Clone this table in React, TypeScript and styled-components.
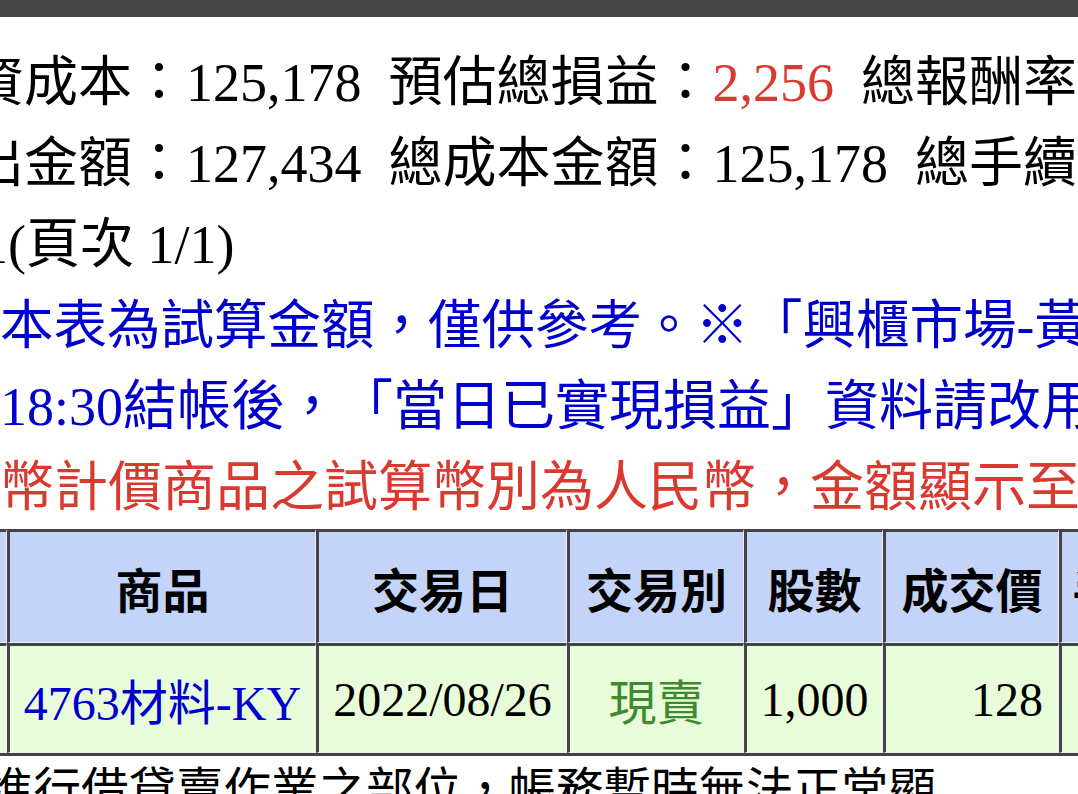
import React from "react";
import styled, { createGlobalStyle } from "styled-components";

const GlobalStyle = createGlobalStyle`
  html, body {
    margin: 0;
    padding: 0;
    background: #ffffff;
    overflow: hidden;
  }
`;

const SERIF = `"Liberation Serif", "Noto Sans CJK TC", serif`;
const SANS = `"Noto Sans CJK TC", "Noto Sans", sans-serif`;

const Page = styled.div`
  width: 1078px;
  height: 794px;
  overflow: hidden;
  background: #ffffff;
  font-family: ${SERIF};
  color: #000000;
  text-spacing-trim: space-all;
`;

const TopBar = styled.div`
  height: 17px;
  background: #464646;
`;

const Summary = styled.div`
  padding-top: 26px;
  display: flex;
  flex-direction: column;
`;

const Line = styled.div<{
  $shift?: number;
  $size?: number;
  $tone?: "blue" | "red" | "black";
}>`
  height: 81px;
  line-height: 81px;
  font-size: ${(p) => p.$size ?? 54}px;
  white-space: nowrap;
  margin-left: ${(p) => p.$shift ?? 0}px;
  color: ${(p) =>
    p.$tone === "blue" ? "#0000cc" : p.$tone === "red" ? "#d93a2f" : "#000000"};
`;

const Gain = styled.span`
  color: #d93a2f;
`;

const Table = styled.div`
  display: grid;
  grid-template-columns: 100px 309px 251px 177px 139px 176px 166px;
  width: max-content;
  margin-left: -93px;
  border-bottom: 3px solid #444444;
`;

const Cell = styled.div<{ $head?: boolean; $align?: "center" | "right" }>`
  box-sizing: border-box;
  height: ${(p) => (p.$head ? 114 : 110)}px;
  border-top: 3px solid #444444;
  border-left: 3px solid #444444;
  border-right: 1px solid #eef0f4;
  border-bottom: 1px solid #eef0f4;
  background: ${(p) => (p.$head ? "#c4d4f8" : "#e9fcd9")};
  display: flex;
  align-items: center;
  justify-content: ${(p) => (p.$align === "right" ? "flex-end" : "center")};
  padding: 0 ${(p) => (p.$align === "right" ? 15 : 0)}px 0 0;
  white-space: nowrap;
  font-family: ${(p) => (p.$head ? SANS : SERIF)};
  font-weight: ${(p) => (p.$head ? 700 : 400)};
  font-size: ${(p) => (p.$head ? 47 : 48)}px;
  color: #000000;
`;

const ProductLink = styled.span`
  color: #0000cc;
`;

const SellTag = styled.span`
  color: #3d8b2e;
  font-family: ${SANS};
`;

const Footnote = styled.p`
  margin: 0 0 0 -14px;
  width: 962px;
  font-size: 47.5px;
  line-height: 70px;
  color: #000000;
`;

export default function App() {
  return (
    <Page>
      <GlobalStyle />
      <TopBar />
      <Summary>
        <Line $shift={-30}>
          資成本：125,178{"\u00a0\u00a0"}預估總損益：<Gain>2,256</Gain>
          {"\u00a0\u00a0"}總報酬率：1.80%
        </Line>
        <Line $shift={-30}>
          出金額：127,434{"\u00a0\u00a0"}總成本金額：125,178{"\u00a0\u00a0"}總手續費：181
        </Line>
        <Line $shift={-19}>1(頁次 1/1)</Line>
        <Line $tone="blue" $size={53.5}>
          本表為試算金額，僅供參考。※「興櫃市場-黃金
        </Line>
        <Line $tone="blue">18:30結帳後，「當日已實現損益」資料請改用</Line>
        <Line $tone="red">幣計價商品之試算幣別為人民幣，金額顯示至</Line>
      </Summary>
      <Table>
        <Cell $head />
        <Cell $head>商品</Cell>
        <Cell $head>交易日</Cell>
        <Cell $head>交易別</Cell>
        <Cell $head>股數</Cell>
        <Cell $head>成交價</Cell>
        <Cell $head>手續費</Cell>

        <Cell />
        <Cell>
          <ProductLink>4763材料-KY</ProductLink>
        </Cell>
        <Cell>2022/08/26</Cell>
        <Cell>
          <SellTag>現賣</SellTag>
        </Cell>
        <Cell>1,000</Cell>
        <Cell $align="right">128</Cell>
        <Cell $align="right">181</Cell>
      </Table>
      <Footnote>進行借貸賣作業之部位，帳務暫時無法正常顯示。</Footnote>
    </Page>
  );
}
